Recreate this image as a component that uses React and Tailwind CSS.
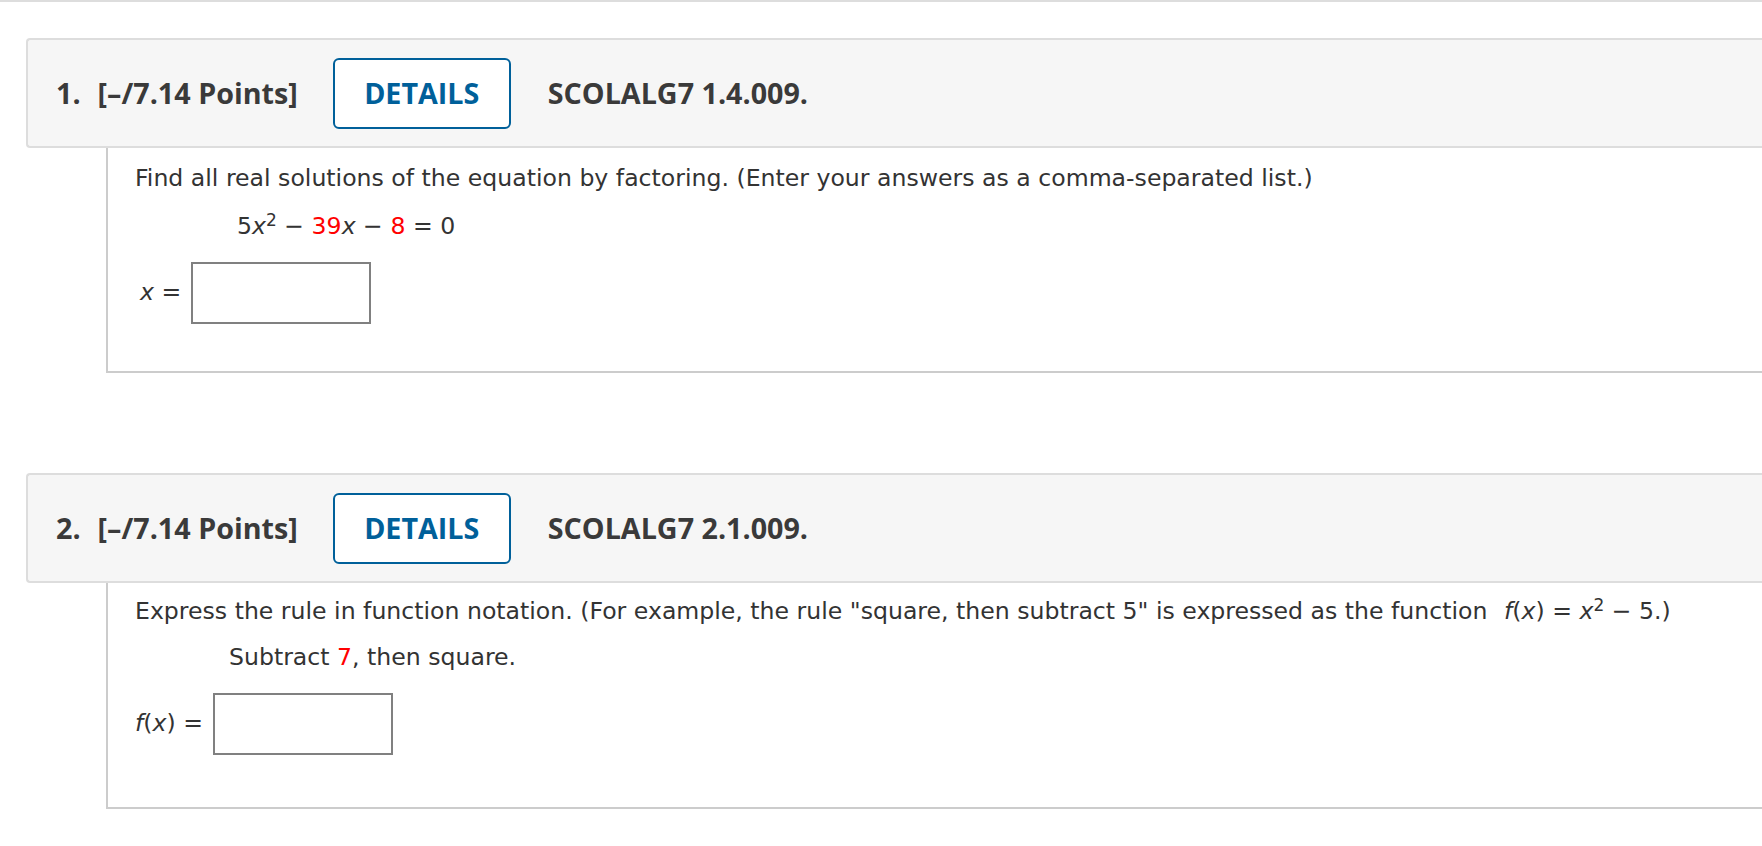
import React from 'react';

const body = { fontFamily: '"DejaVu Sans", Verdana, sans-serif' };
const head = { fontFamily: '"Open Sans", "Liberation Sans", sans-serif' };

function Header({ num, code }) {
  return (
    <div
      className="flex items-center h-[110px] bg-[#f6f6f6] border-2 border-r-0 border-[#dddddd] rounded-l-[4px] pl-[28px] text-[28.7px] font-bold text-[#3a3a3a]"
      style={head}
    >
      <span>{num}.</span>
      <span className="ml-[17px]">[–/7.14 Points]</span>
      <button className="ml-[35px] w-[178px] h-[71px] bg-white border-2 border-[#00609a] rounded-[6px] text-[#00609a] font-bold">
        DETAILS
      </button>
      <span className="ml-[37px]">{code}</span>
    </div>
  );
}

function Answer({ label, indent }) {
  return (
    <div className="flex items-center mt-[20px]">
      <span className={indent}>{label}</span>
      <div className="ml-[10px] w-[180px] h-[62px] bg-white border-2 border-[#808080]" />
    </div>
  );
}

export default function App() {
  return (
    <div className="min-h-screen bg-white border-t-2 border-[#dddddd] text-[#333333]" style={body}>
      <div className="pl-[26px] pt-[36px]">
        {/* question 1 */}
        <section>
          <Header num="1" code="SCOLALG7 1.4.009." />
          <div className="ml-[80px] border-l-2 border-b-2 border-[#cccccc] pl-[27px] pt-[14px] pb-[47px] text-[23.6px]">
            <p className="leading-[32px]">
              Find all real solutions of the equation by factoring. (Enter your answers as a comma-separated list.)
            </p>
            <p className="mt-[16px] ml-[102px] leading-[32px]">
              5<i>x</i><sup className="text-[17px]">2</sup> − <span className="text-[#ff0000]">39</span><i>x</i> − <span className="text-[#ff0000]">8</span> = 0
            </p>
            <Answer label={<><i>x</i> =</>} indent="ml-[5px]" />
          </div>
        </section>

        {/* question 2 */}
        <section className="mt-[100px]">
          <Header num="2" code="SCOLALG7 2.1.009." />
          <div className="ml-[80px] border-l-2 border-b-2 border-[#cccccc] pl-[27px] pt-[12px] pb-[52px] text-[23.6px]">
            <p className="leading-[32px]">
              Express the rule in function notation. (For example, the rule "square, then subtract 5" is expressed as the function{' '}
              <span className="ml-[9px]">
                <i>f</i>(<i>x</i>) = <i>x</i><sup className="text-[17px]">2</sup> − 5.)
              </span>
            </p>
            <p className="mt-[14px] ml-[94px] leading-[32px]">
              Subtract <span className="text-[#ff0000]">7</span>, then square.
            </p>
            <Answer label={<><i>f</i>(<i>x</i>) =</>} indent="" />
          </div>
        </section>
      </div>
    </div>
  );
}
